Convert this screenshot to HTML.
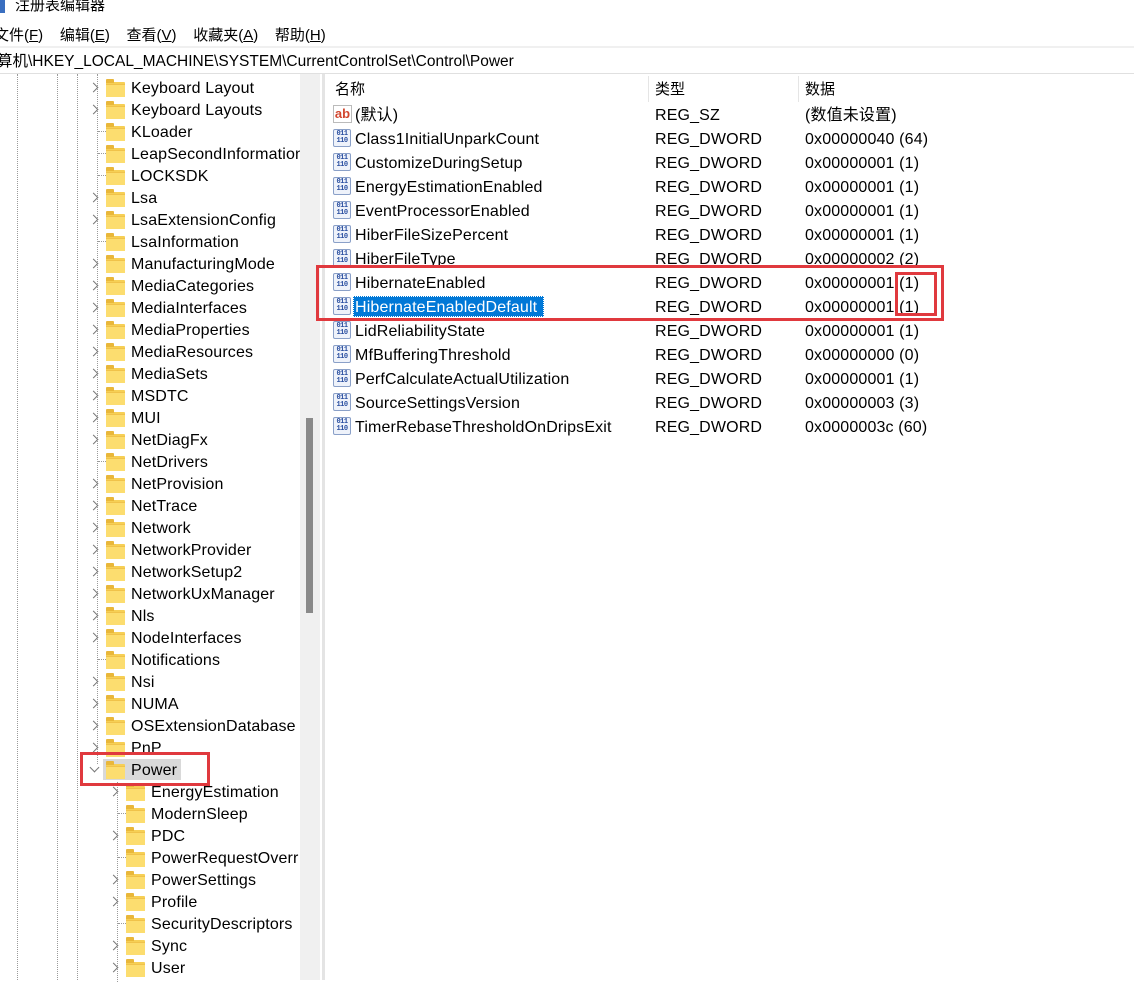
<!DOCTYPE html>
<html><head><meta charset="utf-8"><style>
*{margin:0;padding:0;box-sizing:border-box}
body{width:1134px;height:980px;background:#fff;position:relative;overflow:hidden;font-family:"Liberation Sans","Noto Sans CJK SC",sans-serif;font-size:16px;color:#000}
.a{position:absolute;white-space:nowrap}
.t{line-height:22px;letter-spacing:0.15px}
.fold{position:absolute;width:19px;height:14px;background:#f6cf55;border-radius:1px}
.fold:before{content:"";position:absolute;left:0;top:-3px;width:8px;height:4px;background:#e9b73a;border-radius:1px 1px 0 0}
.fold:after{content:"";position:absolute;left:0;top:2px;width:19px;height:12px;background:#fcdd6f;border-top:1px solid #f0c24a}
.arr{position:absolute;width:7px;height:7px;border-right:1.5px solid #777;border-top:1.5px solid #777;transform:rotate(45deg);background:#fff}
.vd{position:absolute;width:1px;border-left:1px dotted #9a9a9a}
.hd{position:absolute;height:1px;border-top:1px dotted #9a9a9a;width:8px}
.ic{position:absolute;width:18px;height:18px;border:1px solid #8aa0c8;background:#eef2fa;border-radius:2px;font-family:"Liberation Mono",monospace;font-size:7px;line-height:7px;color:#2a4fa0;font-weight:bold;text-align:center;padding-top:1px;letter-spacing:-0.5px}
.z{z-index:5}
</style></head><body>
<div class="a" style="left:0;top:0;width:5px;height:13px;background:#3a6fc0"></div>
<div class="a" style="left:15px;top:-4px;font-size:15px;line-height:20px">注册表编辑器</div>
<div class="a" style="left:-6px;top:26px;line-height:20px;font-size:15px">文件(<u>F</u>)&nbsp;&nbsp;&nbsp;&nbsp;编辑(<u>E</u>)&nbsp;&nbsp;&nbsp;&nbsp;查看(<u>V</u>)&nbsp;&nbsp;&nbsp;&nbsp;收藏夹(<u>A</u>)&nbsp;&nbsp;&nbsp;&nbsp;帮助(<u>H</u>)</div>
<div class="a" style="left:0;top:46px;width:1134px;height:2px;background:#f0f0f0"></div>
<div class="a" style="left:-3px;top:52px;line-height:20px;font-size:15.5px">算机\HKEY_LOCAL_MACHINE\SYSTEM\CurrentControlSet\Control\Power</div>
<div class="a" style="left:0;top:73px;width:1134px;height:1px;background:#e0e0e0"></div>
<div class="vd" style="left:17px;top:74px;height:906px"></div>
<div class="vd" style="left:57px;top:74px;height:906px"></div>
<div class="vd" style="left:77px;top:74px;height:906px"></div>
<div class="vd" style="left:97px;top:74px;height:690px"></div>
<div class="vd" style="left:117px;top:782px;height:200px"></div>
<div class="a z" style="left:300px;top:74px;width:20px;height:906px;background:#f0f0f0"></div>
<div class="a z" style="left:306px;top:418px;width:7px;height:195px;background:#8a8a8a"></div>
<div class="a z" style="left:320px;top:74px;width:2px;height:906px;background:#fff"></div>
<div class="a z" style="left:322px;top:74px;width:3px;height:906px;background:#e4e4e4"></div>
<div id="tree"></div>
<div id="list"></div>
<div class="a" style="left:335px;top:80px;line-height:20px;font-size:15px">名称</div>
<div class="a" style="left:655px;top:80px;line-height:20px;font-size:15px">类型</div>
<div class="a" style="left:805px;top:80px;line-height:20px;font-size:15px">数据</div>
<div class="a" style="left:648px;top:76px;width:1px;height:26px;background:#e5e5e5"></div>
<div class="a" style="left:798px;top:76px;width:1px;height:26px;background:#e5e5e5"></div>
<div class="a z" style="left:316px;top:265px;width:628px;height:56px;border:3px solid #e0393e"></div>
<div class="a z" style="left:895px;top:272px;width:42px;height:44px;border:3px solid #e0393e"></div>
<div class="a z" style="left:80px;top:752px;width:130px;height:34px;border:3px solid #e0393e"></div>
<script>
var t=[["Keyboard Layout",1],["Keyboard Layouts",1],["KLoader",0],["LeapSecondInformation",0],["LOCKSDK",0],["Lsa",1],["LsaExtensionConfig",1],["LsaInformation",0],["ManufacturingMode",1],["MediaCategories",1],["MediaInterfaces",1],["MediaProperties",1],["MediaResources",1],["MediaSets",1],["MSDTC",1],["MUI",1],["NetDiagFx",1],["NetDrivers",0],["NetProvision",1],["NetTrace",1],["Network",1],["NetworkProvider",1],["NetworkSetup2",1],["NetworkUxManager",1],["Nls",1],["NodeInterfaces",1],["Notifications",0],["Nsi",1],["NUMA",1],["OSExtensionDatabase",1],["PnP",1],["Power",2],
["EnergyEstimation",1,1],["ModernSleep",0,1],["PDC",1,1],["PowerRequestOverr",0,1],["PowerSettings",1,1],["Profile",1,1],["SecurityDescriptors",0,1],["Sync",1,1],["User",1,1]];
var h="";
t.forEach(function(r,i){var y=76+i*22;var o=r[2]?20:0;var ty=y+2;
if(r[1]==2){h+='<div class="a" style="left:103px;top:'+(y+1)+'px;width:78px;height:21px;background:#d9d9d9"></div>';h+='<div class="arr" style="left:91px;top:'+(y+6)+'px;transform:rotate(135deg)"></div>';}
else if(r[1]==1)h+='<div class="arr" style="left:'+(90+o)+'px;top:'+(y+8)+'px"></div>';
else h+='<div class="hd" style="left:'+(98+o)+'px;top:'+(y+11)+'px"></div>';
h+='<div class="fold" style="left:'+(106+o)+'px;top:'+(y+6)+'px"></div>';
h+='<div class="a t" style="left:'+(131+o)+'px;top:'+ty+'px">'+r[0]+'</div>';});
document.getElementById("tree").outerHTML=h;
var l=[["(默认)","REG_SZ","(数值未设置)"],["Class1InitialUnparkCount","REG_DWORD","0x00000040 (64)"],["CustomizeDuringSetup","REG_DWORD","0x00000001 (1)"],["EnergyEstimationEnabled","REG_DWORD","0x00000001 (1)"],["EventProcessorEnabled","REG_DWORD","0x00000001 (1)"],["HiberFileSizePercent","REG_DWORD","0x00000001 (1)"],["HiberFileType","REG_DWORD","0x00000002 (2)"],["HibernateEnabled","REG_DWORD","0x00000001 (1)"],["HibernateEnabledDefault","REG_DWORD","0x00000001 (1)"],["LidReliabilityState","REG_DWORD","0x00000001 (1)"],["MfBufferingThreshold","REG_DWORD","0x00000000 (0)"],["PerfCalculateActualUtilization","REG_DWORD","0x00000001 (1)"],["SourceSettingsVersion","REG_DWORD","0x00000003 (3)"],["TimerRebaseThresholdOnDripsExit","REG_DWORD","0x0000003c (60)"]];
h="";
l.forEach(function(r,i){var y=103+i*24;
if(i==0)h+='<div class="a" style="left:333px;top:'+(y+2)+'px;width:19px;height:18px;border:1px solid #bbb;background:#fff;color:#d2462e;font-weight:bold;font-size:13px;line-height:15px;text-align:center">ab</div>';
else h+='<div class="ic" style="left:333px;top:'+(y+2)+'px">011<br>110</div>';
if(i==8)h+='<div class="a" style="left:353px;top:'+(y+1)+'px;width:191px;height:21px;background:#0078d7;border:1px dotted #fff"></div>';
h+='<div class="a t" style="left:355px;top:'+(y+2)+'px;'+(i==8?'color:#fff':'')+'">'+r[0]+'</div>';
h+='<div class="a t" style="left:655px;top:'+(y+2)+'px">'+r[1]+'</div>';
h+='<div class="a t" style="left:805px;top:'+(y+2)+'px">'+r[2]+'</div>';});
document.getElementById("list").outerHTML=h;
</script>
</body></html>
